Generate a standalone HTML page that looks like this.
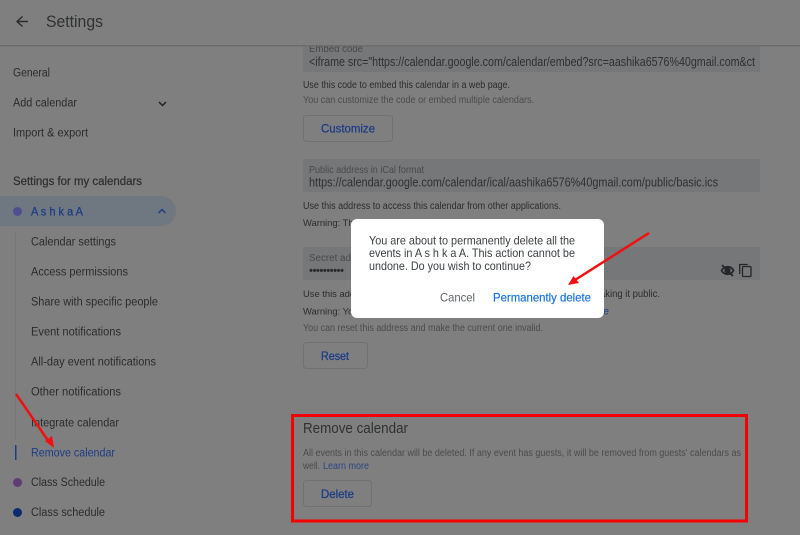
<!DOCTYPE html>
<html><head><meta charset="utf-8"><style>
html,body{margin:0;padding:0;width:800px;height:535px;overflow:hidden;background:#7f7f7f}
svg{display:block;filter:blur(.3px)}
text{font-family:"Liberation Sans",sans-serif;font-size:11.5px;fill:#2b2c2e}
.s{font-size:10px}
.c{font-size:9.4px}
.l{fill:#4a4b4d}
.b{fill:#1f3d86}
.md{fill:#1f3d86;stroke:#1f3d86;stroke-width:.3px;font-size:12px}
.hd{fill:#2f3032;stroke:#2f3032;stroke-width:.25px}
.f{font-size:12.5px;fill:#2f3032}
.m{font-size:10.5px;fill:#48494b}
.d{font-size:12px;fill:#3c4043}
</style></head><body>
<svg width="800" height="535" viewBox="0 0 800 535" xmlns="http://www.w3.org/2000/svg">
<rect width="800" height="535" fill="#7f7f7f"/>

<!-- content fields -->
<rect x="303" y="46" width="457" height="26" fill="#767779"/>
<rect x="303" y="159" width="457" height="33" fill="#767779"/>
<rect x="303" y="247" width="457" height="33" fill="#767779"/>

<text class="m" x="309" y="52" textLength="54" lengthAdjust="spacingAndGlyphs">Embed code</text>
<text class="f" x="309" y="66" textLength="446" lengthAdjust="spacingAndGlyphs">&lt;iframe src="https://calendar.google.com/calendar/embed?src=aashika6576%40gmail.com&amp;ct</text>
<text class="s" x="303" y="88" textLength="207" lengthAdjust="spacingAndGlyphs">Use this code to embed this calendar in a web page.</text>
<text class="s l" x="303" y="103" textLength="231" lengthAdjust="spacingAndGlyphs">You can customize the code or embed multiple calendars.</text>
<rect x="303.500" y="115.500" width="89" height="26" rx="3" fill="none" stroke="#707172"/>
<text class="md" x="321" y="132.500" textLength="54" lengthAdjust="spacingAndGlyphs">Customize</text>

<text class="m" x="309" y="173" textLength="115" lengthAdjust="spacingAndGlyphs">Public address in iCal format</text>
<text class="f" x="309" y="186.500" textLength="409" lengthAdjust="spacingAndGlyphs">https://calendar.google.com/calendar/ical/aashika6576%40gmail.com/public/basic.ics</text>
<text class="s" x="303" y="209" textLength="258" lengthAdjust="spacingAndGlyphs">Use this address to access this calendar from other applications.</text>
<text class="c" x="303" y="226">Warning: This address</text>

<text class="m" x="309" y="261" style="font-size:9.800px">Secret address in iCal</text>
<text x="309" y="274.500" font-size="11" textLength="35" lengthAdjust="spacing">••••••••••</text>

<!-- eye off -->
<g fill="none" stroke="#26272a" stroke-width="1.800">
<path d="M721.500 270.500c3-5 9.500-5 12 0c-2.500 5-9 5-12 0z"/>
<circle cx="727.500" cy="270.500" r="2.200" fill="#26272a"/>
<path d="M722 265l11 11"/>
</g>
<!-- copy -->
<g fill="none" stroke="#26272a" stroke-width="1.300">
<path d="M739.700 274v-9.500h8"/>
<rect x="742.500" y="266.500" width="8.500" height="10" rx="1"/>
</g>

<text class="c" x="303" y="297">Use this address to access</text>
<text class="s" x="600" y="297" textLength="60" lengthAdjust="spacingAndGlyphs">aking it public.</text>
<text class="c" x="303" y="314.500">Warning: You should not</text>
<text class="s b" x="603" y="314.500" textLength="6" lengthAdjust="spacingAndGlyphs">e</text>
<text class="s l" x="303" y="331" textLength="240" lengthAdjust="spacingAndGlyphs">You can reset this address and make the current one invalid.</text>
<rect x="303.500" y="342.500" width="64" height="26" rx="3" fill="none" stroke="#707172"/>
<text class="md" x="321" y="360" textLength="28" lengthAdjust="spacingAndGlyphs">Reset</text>

<text x="303" y="433" style="font-size:15px;fill:#303133" textLength="105" lengthAdjust="spacingAndGlyphs">Remove calendar</text>
<text class="s l" x="303" y="456" textLength="438" lengthAdjust="spacingAndGlyphs">All events in this calendar will be deleted. If any event has guests, it will be removed from guests' calendars as</text>
<text class="s l" x="303" y="469" textLength="17" lengthAdjust="spacingAndGlyphs">well.</text>
<text class="s" x="323" y="469" textLength="46" lengthAdjust="spacingAndGlyphs" style="fill:#2f4583">Learn more</text>
<rect x="303.500" y="480.500" width="68" height="26" rx="3" fill="none" stroke="#707172"/>
<text class="md" x="321" y="498" textLength="33" lengthAdjust="spacingAndGlyphs">Delete</text>

<!-- header -->
<rect x="0" y="0" width="800" height="45" fill="#7f7f7f"/>
<rect x="0" y="45" width="800" height="1.500" fill="#6c6c6c"/>
<path d="M28 21.500H17.500M22.500 16.500l-5.500 5 5.500 5" fill="none" stroke="#2b2c2e" stroke-width="1.400"/>
<text x="46" y="27" style="font-size:17px;fill:#303133" textLength="57" lengthAdjust="spacingAndGlyphs">Settings</text>

<!-- sidebar -->
<text x="13" y="76.500" textLength="37" lengthAdjust="spacingAndGlyphs">General</text>
<text x="13" y="106.500" textLength="64" lengthAdjust="spacingAndGlyphs">Add calendar</text>
<path d="M159 102l3.500 3.500 3.500-3.500" fill="none" stroke="#222" stroke-width="1.500"/>
<text x="13" y="136.500" textLength="75" lengthAdjust="spacingAndGlyphs">Import &amp; export</text>
<text class="hd" x="13" y="185" textLength="129" lengthAdjust="spacingAndGlyphs">Settings for my calendars</text>

<path d="M0 196H161a15 15 0 0 1 0 30H0z" fill="#6f7781"/>
<circle cx="17.500" cy="211.500" r="4.500" fill="#4e4f91"/>
<text class="md" x="31" y="215.500" textLength="52" lengthAdjust="spacingAndGlyphs">A s h k a A</text>
<path d="M158.500 213l3.500-3.500 3.500 3.500" fill="none" stroke="#1f3d86" stroke-width="1.500"/>

<rect x="15" y="232" width="1" height="208" fill="#747678"/>
<rect x="15" y="445" width="1.500" height="15" fill="#1f3d86"/>

<text x="31" y="245.500" textLength="85" lengthAdjust="spacingAndGlyphs">Calendar settings</text>
<text x="31" y="275.500" textLength="97" lengthAdjust="spacingAndGlyphs">Access permissions</text>
<text x="31" y="305.500" textLength="127" lengthAdjust="spacingAndGlyphs">Share with specific people</text>
<text x="31" y="335.500" textLength="90" lengthAdjust="spacingAndGlyphs">Event notifications</text>
<text x="31" y="365.500" textLength="125" lengthAdjust="spacingAndGlyphs">All-day event notifications</text>
<text x="31" y="395.500" textLength="90" lengthAdjust="spacingAndGlyphs">Other notifications</text>
<text x="31" y="426.500" textLength="88" lengthAdjust="spacingAndGlyphs">Integrate calendar</text>
<text class="b" x="31" y="456.500" textLength="84" lengthAdjust="spacingAndGlyphs">Remove calendar</text>
<circle cx="17.500" cy="482.500" r="4.500" fill="#5f3d72"/>
<text x="31" y="486" textLength="74" lengthAdjust="spacingAndGlyphs">Class Schedule</text>
<circle cx="17.500" cy="512.500" r="4.500" fill="#0d2a6f"/>
<text x="31" y="516" textLength="74" lengthAdjust="spacingAndGlyphs">Class schedule</text>

<!-- dialog -->
<rect x="351" y="219" width="253" height="99" rx="6" fill="#ffffff"/>
<text class="d" x="369" y="244.500" textLength="206" lengthAdjust="spacingAndGlyphs">You are about to permanently delete all the</text>
<text class="d" x="369" y="257" textLength="206" lengthAdjust="spacingAndGlyphs">events in A s h k a A. This action cannot be</text>
<text class="d" x="369" y="270" textLength="162" lengthAdjust="spacingAndGlyphs">undone. Do you wish to continue?</text>
<text class="d" x="440" y="301.500" textLength="35" lengthAdjust="spacingAndGlyphs" style="fill:#5f6368">Cancel</text>
<text class="d" x="493" y="301.500" textLength="98" lengthAdjust="spacingAndGlyphs" style="fill:#1a73e8;stroke:#1a73e8;stroke-width:.2px">Permanently delete</text>

<!-- annotations -->
<rect x="292.500" y="415.500" width="454" height="105.500" fill="none" stroke="#f40000" stroke-width="3"/>
<path d="M649 233L575 280" stroke="#f01010" stroke-width="2.500" fill="none"/>
<path d="M568 285L573.500 276L579 283z" fill="#f01010"/>
<path d="M16 394L49 442" stroke="#f01010" stroke-width="2.500" fill="none"/>
<path d="M54 448L45 441L52 436z" fill="#f01010"/>
</svg>
</body></html>
